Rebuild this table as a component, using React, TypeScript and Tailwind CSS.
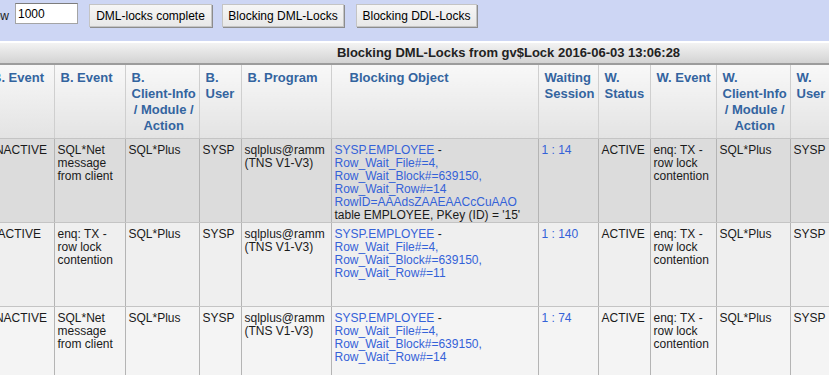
import React from 'react';

const font = "font-['Helvetica','Liberation_Sans',Arial,sans-serif]";

// column widths (px); first column is partly scrolled off to the left
const widths = [69, 71, 74, 42, 90, 207, 60, 52, 66, 74, 60, 182];

type Head = { first?: string; lines: string[]; center?: boolean; pad?: string };

const heads: Head[] = [
  { lines: ['B. Event'], center: true, pad: 'pl-[7px]' },
  { lines: ['B. Event'] },
  { first: 'B.', lines: ['Client-Info', '/ Module /', 'Action'], center: true },
  { first: 'B.', lines: ['User'] },
  { lines: ['B. Program'] },
  { lines: ['Blocking Object'], pad: 'pl-[18px]' },
  { lines: ['Waiting', 'Session'] },
  { first: 'W.', lines: ['Status'] },
  { lines: ['W. Event'] },
  { first: 'W.', lines: ['Client-Info', '/ Module /', 'Action'], center: true },
  { first: 'W.', lines: ['User'] },
  { lines: ['W. Program'] },
];

type Row = {
  status: string;
  event: string[];
  rowNr: string;
  rowId?: string;
  pkey?: string;
  session: string;
  bg: string;
};

const rows: Row[] = [
  {
    status: 'INACTIVE',
    event: ['SQL*Net', 'message', 'from client'],
    rowNr: '14',
    rowId: 'RowID=AAAdsZAAEAACcCuAAO',
    pkey: "table EMPLOYEE, PKey (ID) = '15'",
    session: '1 : 14',
    bg: 'bg-[#dcdcdc]',
  },
  {
    status: 'ACTIVE',
    event: ['enq: TX -', 'row lock', 'contention'],
    rowNr: '11',
    session: '1 : 140',
    bg: 'bg-[#efefef]',
  },
  {
    status: 'INACTIVE',
    event: ['SQL*Net', 'message', 'from client'],
    rowNr: '14',
    session: '1 : 74',
    bg: 'bg-[#f4f4f4]',
  },
];

const Lines = ({ items }: { items: string[] }) => (
  <>
    {items.map((l, i) => (
      <div key={i} className="whitespace-nowrap">{l}</div>
    ))}
  </>
);

const td = 'align-top px-[3px] pt-[5px] border-r border-dotted border-r-[#b4b4b4] border-b border-b-[#c4c4c4] border-solid';

export default function App() {
  return (
    <div className={`w-[829px] h-[375px] overflow-hidden bg-white ${font} text-[#1a1a1a]`}>
      <div className="w-[1047px] -ml-[15px]">
        {/* toolbar */}
        <div className="h-[41px] bg-[#cdd6f4] flex items-start pt-[4px] text-[12px]">
          <span className="mt-[3px]">Row</span>
          <input
            readOnly
            value="1000"
            className={`ml-[6px] -mt-[1px] w-[63px] h-[21px] bg-white border border-[#a4a4a4] border-t-[#7c7c7c] px-[2px] text-[12px] text-black outline-none ${font}`}
          />
          <button className="ml-[11px] w-[123px] h-[23px] bg-gradient-to-b from-[#f6f6f6] to-[#e8e8e8] border border-[#c4c4c4] shadow-[1px_1px_0_#8c8c8c] text-[12px] text-black">
            DML-locks complete
          </button>
          <button className="ml-[10px] w-[122px] h-[23px] bg-gradient-to-b from-[#f6f6f6] to-[#e8e8e8] border border-[#c4c4c4] shadow-[1px_1px_0_#8c8c8c] text-[12px] text-black">
            Blocking DML-Locks
          </button>
          <button className="ml-[12px] w-[121px] h-[23px] bg-gradient-to-b from-[#f6f6f6] to-[#e8e8e8] border border-[#c4c4c4] shadow-[1px_1px_0_#8c8c8c] text-[12px] text-black">
            Blocking DDL-Locks
          </button>
        </div>

        {/* caption */}
        <div className="h-[24px] border-t-2 border-white border-b-2 border-b-[#9c9c9c] bg-gradient-to-b from-[#f3f3f3] to-[#d3d3d3] flex items-center justify-center">
          <span className="text-[13px] font-bold text-[#222]">
            Blocking DML-Locks from gv$Lock 2016-06-03 13:06:28
          </span>
        </div>

        <table className="table-fixed border-collapse w-[1047px]">
          <colgroup>
            {widths.map((w, i) => (
              <col key={i} style={{ width: w }} />
            ))}
          </colgroup>
          <thead>
            <tr className="h-[73px]">
              {heads.map((h, i) => (
                <th
                  key={i}
                  className={`align-top text-left px-[6px] pt-[5px] ${h.pad ?? ''} text-[13px] font-bold leading-[16px] text-[#33649f] bg-gradient-to-b from-[#f8f8f8] to-[#e3e3e3] border-r border-[#cfcfcf] border-b border-b-[#c4c4c4]`}
                >
                  {h.first && <div className="whitespace-nowrap">{h.first}</div>}
                  <div className={`inline-block ${h.center ? 'text-center' : 'text-left'}`}>
                    <Lines items={h.lines} />
                  </div>
                </th>
              ))}
            </tr>
          </thead>
          <tbody className="text-[12px] leading-[13px]">
            {rows.map((r, i) => (
              <tr key={i} className={`h-[84px] ${r.bg}`}>
                <td className={`${td} text-center`}>{r.status}</td>
                <td className={td}><Lines items={r.event} /></td>
                <td className={td}>SQL*Plus</td>
                <td className={td}>SYSP</td>
                <td className={td}><Lines items={['sqlplus@ramm', '(TNS V1-V3)']} /></td>
                <td className={td}>
                  <div className="whitespace-nowrap">
                    <a className="text-[#3462d8]">SYSP.EMPLOYEE</a> -
                  </div>
                  <div className="text-[#3462d8] whitespace-nowrap">
                    <div>Row_Wait_File#=4,</div>
                    <div>Row_Wait_Block#=639150,</div>
                    <div>Row_Wait_Row#={r.rowNr}</div>
                    {r.rowId && <div>{r.rowId}</div>}
                  </div>
                  {r.pkey && <div className="whitespace-nowrap">{r.pkey}</div>}
                </td>
                <td className={`${td} text-[#3462d8]`}>{r.session}</td>
                <td className={td}>ACTIVE</td>
                <td className={td}><Lines items={['enq: TX -', 'row lock', 'contention']} /></td>
                <td className={td}>SQL*Plus</td>
                <td className={td}>SYSP</td>
                <td className={td}>sqlplus@ramm</td>
              </tr>
            ))}
          </tbody>
        </table>
      </div>
    </div>
  );
}
